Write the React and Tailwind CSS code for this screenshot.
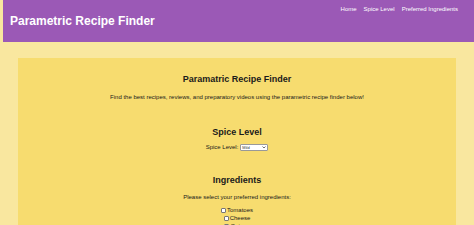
import React from "react";

const ingredients = ["Tomatoes", "Cheese", "Onions"];

export default function App() {
  return (
    <div className="min-h-screen bg-[#f9e79f] font-['Liberation_Sans',Arial,sans-serif] text-[#1a1a1a] overflow-hidden h-[225px]">
      <header className="ml-[3px] h-[42px] bg-[#9b59b6] flex justify-between pl-[7px] pr-[16px]">
        <h1 className="text-[12px] font-bold text-white mt-[15px] leading-[12px]">Parametric Recipe Finder</h1>
        <nav className="flex gap-[7px] text-[6px] text-white mt-[6px] leading-[6px] h-fit">
          <a>Home</a>
          <a>Spice Level</a>
          <a>Preferred Ingredients</a>
        </nav>
      </header>

      <main className="px-[18px] pt-[16px]">
        <section className="bg-[#f7dc6f] pt-[16px] pb-[20px] text-center">
          <h2 className="text-[9px] font-bold leading-[10px]">Paramatric Recipe Finder</h2>
          <p className="text-[6px] leading-[7px] mt-[10px]">
            Find the best recipes, reviews, and preparatory videos using the parametric recipe finder below!
          </p>

          <h2 className="text-[9px] font-bold leading-[10px] mt-[26px]">Spice Level</h2>
          <div className="mt-[7px] flex items-center justify-center gap-[2px] text-[6px] leading-[7px]">
            <label>Spice Level:</label>
            <div className="w-[28px] h-[7px] bg-white border border-[#999] rounded-[1px] flex items-center justify-between px-[1px]">
              <span className="text-[4px] leading-[4px] text-[#333]">Mild</span>
              <svg width="4" height="3" viewBox="0 0 4 3">
                <path d="M0.5 0.5 L2 2 L3.5 0.5" stroke="#333" strokeWidth="0.7" fill="none" />
              </svg>
            </div>
          </div>

          <h2 className="text-[9px] font-bold leading-[10px] mt-[24px]">Ingredients</h2>
          <p className="text-[6px] leading-[7px] mt-[9px]">Please select your preferred ingredients:</p>
          <div className="mt-[5px] flex flex-col items-center text-[6px] leading-[8px]">
            {ingredients.map((name) => (
              <label key={name} className="flex items-center gap-[1px]">
                <span className="w-[5px] h-[5px] bg-white border border-[#777] rounded-[1px]" />
                {name}
              </label>
            ))}
          </div>
        </section>
      </main>
    </div>
  );
}
